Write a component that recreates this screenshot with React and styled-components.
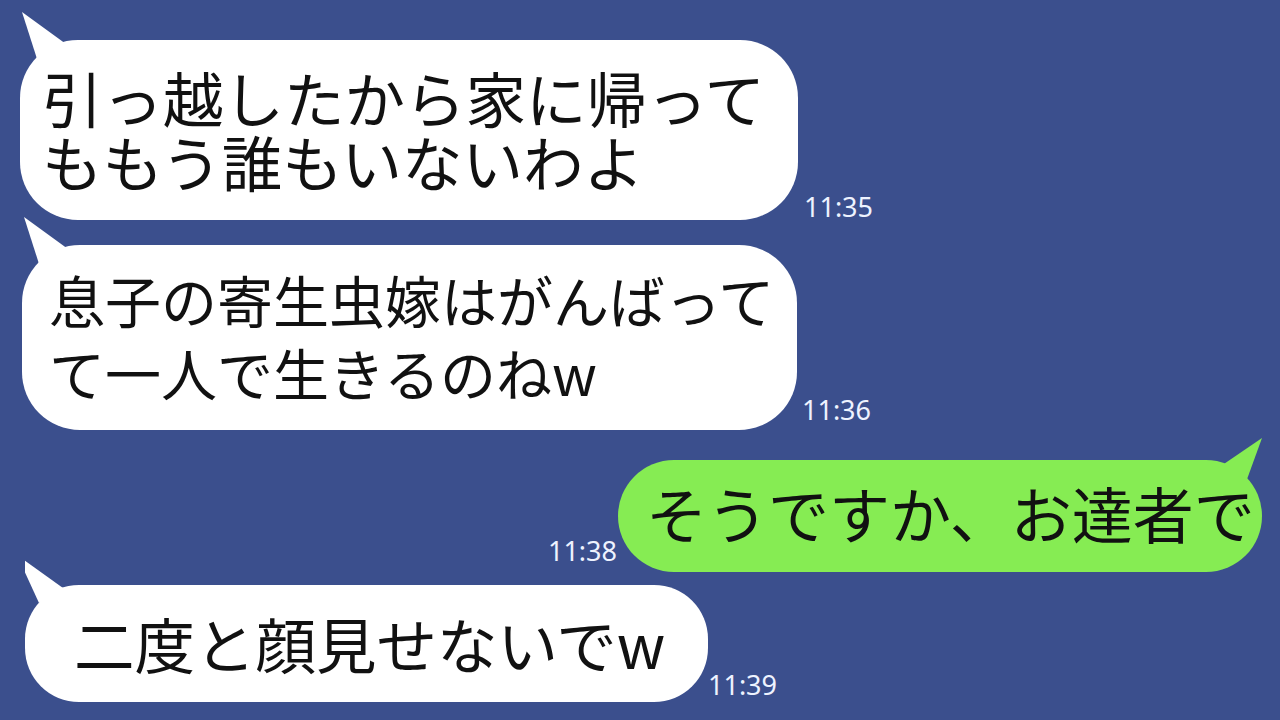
import styled, { createGlobalStyle } from 'styled-components';

const GlobalStyle = createGlobalStyle`
  html, body {
    margin: 0;
    padding: 0;
    background: #3b4f8d;
  }
  body {
    width: 1280px;
    height: 720px;
    overflow: hidden;
    font-family: "Noto Sans CJK JP", "Noto Sans", sans-serif;
  }
`;

const Talk = styled.div`
  display: flex;
  flex-direction: column;
  width: 1280px;
  height: 720px;
  background: #3b4f8d;
`;

const Row = styled.div`
  display: flex;
  align-items: flex-end;
  justify-content: ${(p) => (p.$mine ? 'flex-end' : 'flex-start')};
  gap: ${(p) => p.$gap}px;
  margin-top: ${(p) => p.$top}px;
  padding-left: ${(p) => (p.$mine ? 0 : p.$left)}px;
  padding-right: ${(p) => (p.$mine ? p.$right : 0)}px;
`;

const Bubble = styled.div`
  position: relative;
  box-sizing: border-box;
  display: flex;
  align-items: center;
  width: ${(p) => p.$w}px;
  height: ${(p) => p.$h}px;
  padding: 0 0 ${(p) => p.$pb || 0}px ${(p) => p.$pl}px;
  border-radius: ${(p) => p.$r}px;
  background: ${(p) => (p.$mine ? '#86ec53' : '#ffffff')};
  color: #111111;
  font-size: ${(p) => p.$fs}px;
  line-height: ${(p) => p.$lh}px;
  white-space: nowrap;

  /* speech tail */
  &::before {
    content: '';
    position: absolute;
    background: inherit;
    width: 60px;
    height: 60px;
    top: -30px;
    ${(p) => (p.$mine ? 'right: 0;' : 'left: 0;')}
    clip-path: ${(p) => p.$tail};
  }
`;

const Time = styled.span`
  font-family: "Noto Sans", sans-serif;
  font-size: 27px;
  line-height: 27px;
  color: #eef3ff;
  margin-bottom: ${(p) => p.$mb}px;
`;

const leftTail = 'polygon(2px 2px, 46px 34px, 18px 52px)';
const lowTail = 'polygon(-8px 0px, 38px 33px, 14px 48px)';
const rightTail = 'polygon(60px 8px, 44px 52px, 16px 38px)';

export default function App() {
  return (
    <>
      <GlobalStyle />
      <Talk>
        <Row $top={40} $left={20} $gap={6}>
          <Bubble $w={778} $h={180} $r={58} $pl={22} $pb={3} $fs={60.5} $lh={64} $tail={leftTail}>
            <div>
              引っ越したから家に帰って
              <br />
              ももう誰もいないわよ
            </div>
          </Bubble>
          <Time $mb={0}>11:35</Time>
        </Row>

        <Row $top={25} $left={22} $gap={5}>
          <Bubble $w={775} $h={185} $r={58} $pl={27} $pb={6} $fs={56} $lh={73} $tail={leftTail}>
            <div>
              息子の寄生虫嫁はがんばって
              <br />
              て一人で生きるのねw
            </div>
          </Bubble>
          <Time $mb={7}>11:36</Time>
        </Row>

        <Row $mine $top={30} $right={18} $gap={1}>
          <Time $mb={8}>11:38</Time>
          <Bubble $mine $w={644} $h={112} $r={56} $pl={28} $pb={7} $fs={61} $lh={70} $tail={rightTail}>
            そうですか、お達者で
          </Bubble>
        </Row>

        <Row $top={13} $left={25} $gap={0}>
          <Bubble $w={683} $h={117} $r={54} $pl={49} $pb={2} $fs={60.5} $lh={70} $tail={lowTail}>
            二度と顔見せないでw
          </Bubble>
          <Time $mb={4}>11:39</Time>
        </Row>
      </Talk>
    </>
  );
}
